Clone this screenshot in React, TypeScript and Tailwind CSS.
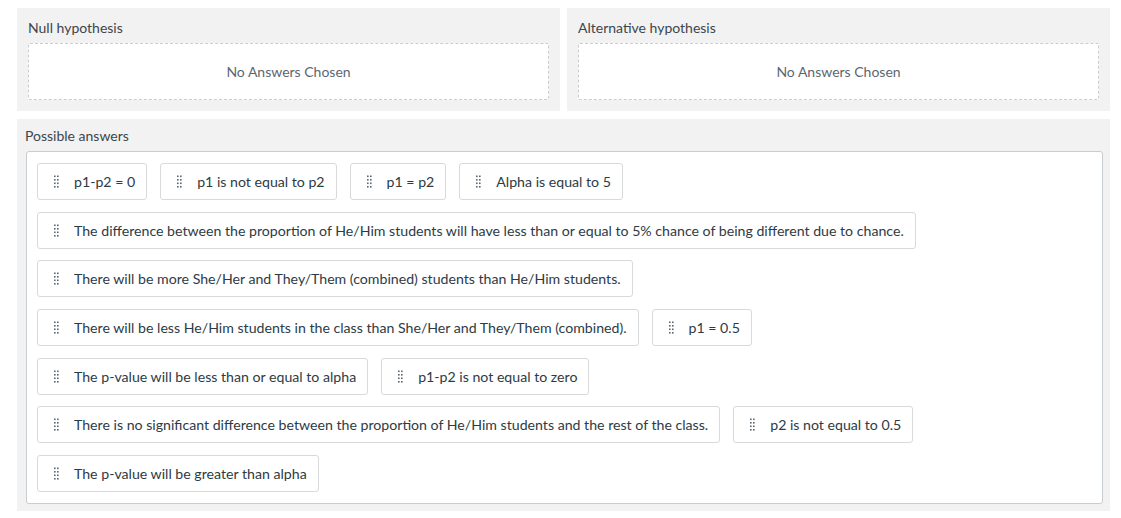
import React from "react";

const rows: string[][] = [
  ["p1-p2 = 0", "p1 is not equal to p2", "p1 = p2", "Alpha is equal to 5"],
  ["The difference between the proportion of He/Him students will have less than or equal to 5% chance of being different due to chance."],
  ["There will be more She/Her and They/Them (combined) students than He/Him students."],
  ["There will be less He/Him students in the class than She/Her and They/Them (combined).", "p1 = 0.5"],
  ["The p-value will be less than or equal to alpha", "p1-p2 is not equal to zero"],
  ["There is no significant difference between the proportion of He/Him students and the rest of the class.", "p2 is not equal to 0.5"],
  ["The p-value will be greater than alpha"],
];

function DragHandle() {
  return (
    <svg width="5" height="13" viewBox="0 0 5 13" className="shrink-0">
      {[0, 1, 2, 3].map((r) =>
        [0, 1].map((c) => (
          <rect key={`${r}-${c}`} x={c * 3} y={r * 3.5 + 0.5} width="1.6" height="1.6" fill="#5b6770" />
        ))
      )}
    </svg>
  );
}

function Chip({ label }: { label: string }) {
  return (
    <div className="flex items-center h-[37px] pl-[16px] pr-[11px] gap-[15px] bg-white border border-[#d7d9db] rounded-[3px] text-[14.15px] text-[#2d3b45] whitespace-nowrap">
      <DragHandle />
      <span>{label}</span>
    </div>
  );
}

function DropZone({ title }: { title: string }) {
  return (
    <div className="bg-[#f2f2f2] px-[11px] pt-[10px] pb-[11px]">
      <p className="text-[14px] leading-[20px] text-[#3d464d] mb-[5px]">{title}</p>
      <div className="h-[57px] bg-white border border-dashed border-[#c7cdd1] rounded-[2px] flex items-center justify-center">
        <span className="text-[14px] text-[#5b6770]">No Answers Chosen</span>
      </div>
    </div>
  );
}

export default function App() {
  return (
    <div className="bg-white min-h-[518px] pt-[8px] pl-[17px]" style={{ fontFamily: "Lato, 'Liberation Sans', sans-serif" }}>
      <div className="w-[1093px]">
        <div className="grid grid-cols-2 gap-[7px]">
          <DropZone title="Null hypothesis" />
          <DropZone title="Alternative hypothesis" />
        </div>
        <div className="mt-[8px] bg-[#f2f2f2] pt-[7px] pl-[9px] pr-[7px] pb-[7px]">
          <p className="text-[14px] leading-[20px] text-[#3d464d] -ml-[1px] mb-[5px]">Possible answers</p>
          <div className="bg-white border border-[#c7cdd1] rounded-[3px] pl-[10px] pr-[10px] pt-[11px] pb-[9px] h-[353px] flex flex-col gap-y-[11.67px]">
            {rows.map((row, i) => (
              <div key={i} className="flex gap-x-[13px]">
                {row.map((label) => (
                  <Chip key={label} label={label} />
                ))}
              </div>
            ))}
          </div>
        </div>
      </div>
    </div>
  );
}
